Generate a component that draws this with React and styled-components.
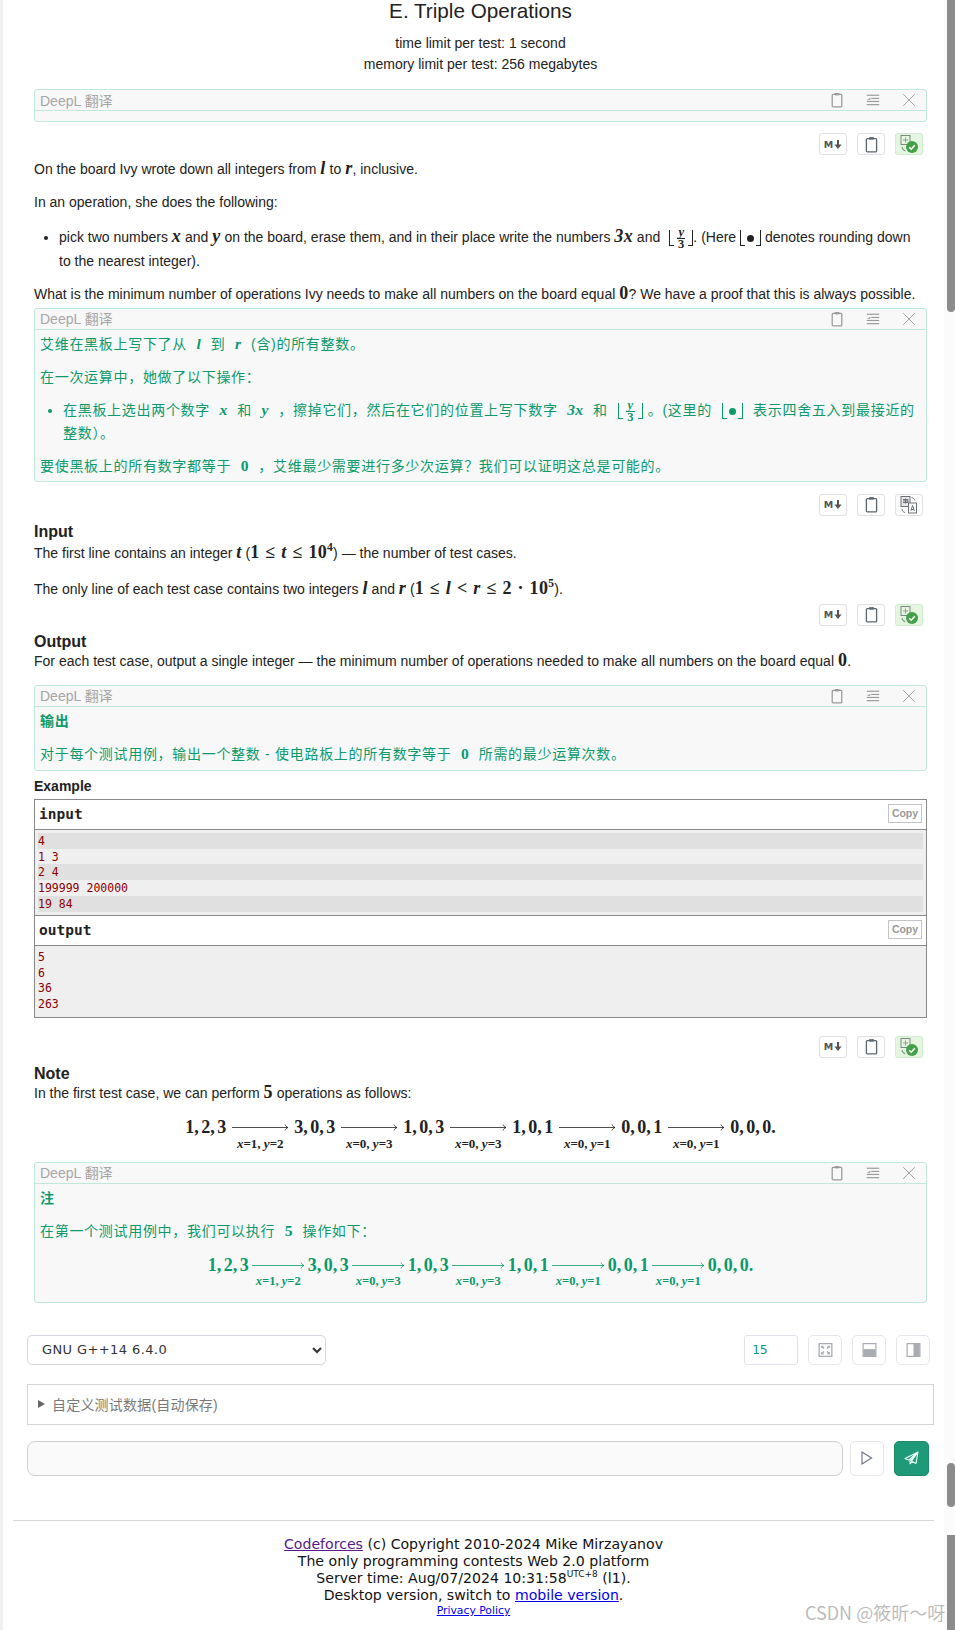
import React from "react";
import styled, { createGlobalStyle } from "styled-components";

const GlobalStyle = createGlobalStyle`
  html, body {
    margin: 0;
    padding: 0;
    background: #fff;
  }
  body {
    font-family: "Liberation Sans", Arial, sans-serif;
    color: #222;
  }
`;

const SANS = `"Liberation Sans", Arial, sans-serif`;
const CJK = `"Liberation Sans", "Noto Sans CJK SC", sans-serif`;
const MONO = `"DejaVu Sans Mono", "Liberation Mono", monospace`;

function ClipboardIcon({ size = 16, color = "#999" }) {
  return (
    <svg width={size} height={size} viewBox="0 0 18 18" fill="none" stroke={color} strokeWidth="1.4">
      <rect x="3.6" y="2.8" width="10.8" height="14" rx="1" />
      <rect x="6.5" y="1.2" width="5" height="2.6" fill={color} stroke="none" />
    </svg>
  );
}

function OutdentIcon() {
  return (
    <svg width="16" height="16" viewBox="0 0 18 18" fill="#999">
      <rect x="2" y="3" width="14" height="1.3" />
      <rect x="7" y="6.6" width="9" height="1.3" />
      <rect x="2" y="10" width="14" height="1.3" />
      <rect x="2" y="13.6" width="14" height="1.3" />
      <path d="M2 8.8l4-2.4v2.4z" />
    </svg>
  );
}

function CloseIcon() {
  return (
    <svg width="16" height="16" viewBox="0 0 18 18" stroke="#999" strokeWidth="1">
      <path d="M2.5 2.5l13 13M15.5 2.5l-13 13" />
    </svg>
  );
}

function DownArrowIcon() {
  return (
    <svg width="8" height="9" viewBox="0 0 8 9" fill="#555">
      <path d="M3 0h2v4.5h2.6L4 9 .4 4.5H3z" />
    </svg>
  );
}

function TranslateDoneIcon() {
  return (
    <svg width="20" height="20" viewBox="0 0 20 20" fill="none">
      <rect x="2" y="1.5" width="9" height="9" stroke="#7a8a7a" strokeWidth="1" />
      <path d="M4 6h5M6.5 3.5v5" stroke="#88a888" strokeWidth="1" />
      <path d="M3 13c.3 2 1.5 3.4 3.4 4" stroke="#7a9a7a" strokeWidth="1.1" />
      <circle cx="13" cy="13" r="6" fill="#43a047" />
      <path d="M10.2 13.2l2 2 3.6-4" stroke="#fff" strokeWidth="1.5" />
    </svg>
  );
}

function TranslateIcon() {
  return (
    <svg width="20" height="20" viewBox="0 0 20 20" fill="none" stroke="#6b7078" strokeWidth="1">
      <rect x="2" y="1.5" width="9" height="10" fill="#e8e8ea" />
      <path d="M4 6h5M6.5 3.5v5M4 4.5h5v3H4" />
      <rect x="9.5" y="8" width="8" height="10" fill="#fff" />
      <path d="M11.8 16l1.8-5.5 1.8 5.5M12.5 14.5h2.2" />
      <path d="M3 14c.2 1.8 1.2 3 3 3.6M12.5 2.5c1.8.3 3 1.4 3.4 3" />
    </svg>
  );
}

function FullscreenIcon() {
  return (
    <svg width="15" height="14" viewBox="0 0 16 16" fill="#a9adb3">
      <path d="M0 0h16v16H0zM1.5 1.5v13h13v-13z" fillRule="evenodd" />
      <path d="M3 3h3.4L5.3 4.1l1.6 1.6-1.2 1.2-1.6-1.6L3 6.4zM13 3v3.4l-1.1-1.1-1.6 1.6-1.2-1.2 1.6-1.6L9.6 3zM3 13V9.6l1.1 1.1 1.6-1.6 1.2 1.2-1.6 1.6L6.4 13zM13 13H9.6l1.1-1.1-1.6-1.6 1.2-1.2 1.6 1.6L13 9.6z" />
    </svg>
  );
}

function SplitBottomIcon() {
  return (
    <svg width="15" height="14" viewBox="0 0 16 16">
      <rect x=".7" y=".7" width="14.6" height="14.6" fill="#fff" stroke="#a9adb3" strokeWidth="1.4" />
      <rect x="1" y="7" width="14" height="8" fill="#a9adb3" />
    </svg>
  );
}

function SplitRightIcon() {
  return (
    <svg width="15" height="14" viewBox="0 0 16 16">
      <rect x=".7" y=".7" width="14.6" height="14.6" fill="#fff" stroke="#a9adb3" strokeWidth="1.4" />
      <rect x="8" y="1" width="7" height="14" fill="#a9adb3" />
    </svg>
  );
}

function PlayIcon() {
  return (
    <svg width="12" height="14" viewBox="0 0 12 14" fill="none" stroke="#6a6f85" strokeWidth="1.1">
      <path d="M1 1l9.6 6L1 13z" />
    </svg>
  );
}

function SendIcon() {
  return (
    <svg width="15" height="14" viewBox="0 0 15 14" fill="none" stroke="#e8fff6" strokeWidth="1.1" strokeLinejoin="round">
      <path d="M14 1L1 7.5l3.6 1.6zM14 1l-2 11.5-4.6-2.4zM14 1L6 9.6v3.2l2-2.4" />
    </svg>
  );
}

function ArrowLine({ width }) {
  return (
    <svg width={width} height="9" viewBox={`0 0 ${width} 9`} fill="none" stroke="currentColor" strokeWidth="0.8">
      <path d={`M0 4.5H${width - 1}M${width - 4} 1.5c.5 1.4 1.6 2.4 3 3c-1.4.6-2.5 1.6-3 3`} />
    </svg>
  );
}

const Page = styled.div`
  box-sizing: border-box;
  width: 955px;
  height: 1630px;
  overflow: hidden;
  position: relative;
  border-left: 3px solid #f0f0f0;
`;

const Statement = styled.div`
  margin: 0 28px 0 31px;
  font-size: 14px;
  line-height: 21px;
`;

const Title = styled.div`
  text-align: center;
  font-size: 20.7px;
  line-height: 22px;
  color: #222;
  margin-bottom: 11px;
`;

const Limit = styled.div`
  text-align: center;
  font-size: 14px;
  line-height: 21px;
`;

const Deepl = styled.div`
  box-sizing: border-box;
  margin-top: ${(p) => p.$top || 0}px;
  border: 1px solid #c0e9dc;
  border-radius: 3px;
  background: #f8f8f8;
  color: #0a9a6c;
  font-family: ${CJK};
  font-size: 14px;
  height: ${(p) => p.$height}px;
`;

const DeeplHead = styled.div`
  box-sizing: border-box;
  height: 21px;
  display: flex;
  align-items: center;
  border-bottom: 1px solid #c0e9dc;
  padding: 0 0 0 5px;
  color: #a6a6a6;
  font-size: 14px;
`;

const DeeplLabel = styled.span`
  padding-top: 2px;
`;

const DeeplTools = styled.div`
  margin-left: auto;
  display: flex;
  gap: 20px;
  padding-right: 9px;
`;

const DeeplBody = styled.div`
  padding: 4px 5px 0;
  line-height: 21px;
`;

const ZhPara = styled.p`
  margin: 0 0 12px;
  letter-spacing: 0.7px;
`;

const ZhList = styled.ul`
  margin: 0 0 12px;
  padding: 0 0 0 23px;
  letter-spacing: 0.7px;
`;

const ToolRow = styled.div`
  display: flex;
  justify-content: flex-end;
  gap: 10px;
  padding-right: 4px;
  margin-top: ${(p) => p.$top || 0}px;
`;

const ToolButton = styled.div`
  box-sizing: border-box;
  width: 28px;
  height: 22px;
  display: flex;
  align-items: center;
  justify-content: center;
  gap: 1px;
  border: 1px solid ${(p) => (p.$done ? "#cfeccd" : "#e0e0e4")};
  border-radius: 3px;
  background: ${(p) => (p.$done ? "#e4f6e2" : "#fff")};
  font-family: "DejaVu Sans", sans-serif;
  font-size: 9.5px;
  font-weight: bold;
  color: #555;
`;

const Para = styled.p`
  margin: ${(p) => p.$top || 0}px 0 0;
`;

const List = styled.ul`
  margin: ${(p) => p.$top || 0}px 0 0;
  padding: 0 8px 0 25px;
  line-height: 23px;
`;

const SectionTitle = styled.div`
  font-size: ${(p) => p.$size || 16}px;
  font-weight: bold;
  line-height: 19px;
  color: #222;
  margin-top: ${(p) => p.$top || 0}px;
`;

const M = styled.span`
  font-family: "Liberation Serif", serif;
  font-weight: bold;
  font-style: ${(p) => (p.$up ? "normal" : "italic")};
  font-size: ${(p) => (p.$gap ? 15.5 : 18)}px;
  line-height: 1;
  white-space: nowrap;
  letter-spacing: 0.3px;
  word-spacing: 1px;
  margin: ${(p) => (p.$gap ? "0 5px" : "0")};
  sup {
    font-size: 11.5px;
    line-height: 0;
    font-style: normal;
  }
`;

const Floor = styled.span`
  white-space: nowrap;
  margin: 0 ${(p) => p.$right || 0}px 0 ${(p) => p.$left || 0}px;
`;

const Frac = styled.span`
  display: inline-flex;
  flex-direction: column;
  align-items: center;
  vertical-align: middle;
  font-family: "Liberation Serif", serif;
  font-weight: bold;
  font-size: 12.5px;
  line-height: 11px;
  margin: 0 3px;
  i, b {
    padding: 0 1px;
  }
  b {
    border-top: 1px solid currentColor;
  }
`;

const Bracket = styled.span`
  display: inline-block;
  box-sizing: border-box;
  width: 5px;
  height: 16px;
  vertical-align: middle;
  border-bottom: 1px solid currentColor;
  border-${(p) => (p.$right ? "right" : "left")}: 1px solid currentColor;
`;

const Dot = styled.span`
  display: inline-block;
  width: 7px;
  height: 7px;
  margin: 0 2px;
  border-radius: 50%;
  vertical-align: middle;
  background: currentColor;
`;

const Samples = styled.div`
  margin-top: 3px;
  border: 1px solid #888;
  font-family: ${MONO};
`;

const SampleHead = styled.div`
  box-sizing: border-box;
  height: ${(p) => p.$h}px;
  display: flex;
  align-items: center;
  justify-content: space-between;
  padding: 0 4px;
  border-bottom: 1px solid #888;
  font-size: 14.5px;
  font-weight: bold;
  color: #222;
`;

const CopyButton = styled.div`
  box-sizing: border-box;
  width: 34px;
  height: 19px;
  border: 1px solid #c4c4c4;
  display: flex;
  align-items: center;
  justify-content: center;
  margin-top: -2px;
  font-family: ${SANS};
  font-size: 10.5px;
  font-weight: bold;
  color: #999;
`;

const SampleBody = styled.div`
  background: #efefef;
  padding: 3px 3px ${(p) => (p.$last ? 5 : 3)}px;
  font-size: 11.5px;
  line-height: 16px;
  color: #8b0000;
  border-bottom: ${(p) => (p.$last ? "none" : "1px solid #888")};
`;

const SampleRow = styled.div`
  height: 15.8px;
  background: ${(p) => (p.$odd ? "#e0e0e0" : "transparent")};
  white-space: pre;
`;

const Equation = styled.div`
  display: flex;
  justify-content: center;
  align-items: flex-start;
  gap: ${(p) => (p.$small ? 3 : 5.5)}px;
  margin-top: ${(p) => p.$top || 0}px;
  height: ${(p) => p.$h}px;
  font-family: "Liberation Serif", serif;
  font-weight: bold;
  font-size: 18px;
  word-spacing: -2px;
  line-height: 22px;
  white-space: nowrap;
`;

const Transition = styled.div`
  display: flex;
  flex-direction: column;
  align-items: center;
  width: ${(p) => (p.$small ? 53 : 57)}px;
  padding-top: 7px;
  font-size: ${(p) => (p.$small ? 12.5 : 13)}px;
  word-spacing: 0;
  line-height: 12px;
  svg {
    display: block;
    margin-bottom: ${(p) => (p.$small ? 5 : 6)}px;
  }
`;

const Toolbar = styled.div`
  display: flex;
  align-items: center;
  margin: 32px 25px 0 24px;
  height: 30px;
`;

const LangSelect = styled.select`
  box-sizing: border-box;
  width: 299px;
  height: 30px;
  border: 1px solid #d5d8e0;
  border-radius: 5px;
  background: #fff;
  padding: 0 10px;
  font-family: "DejaVu Sans", sans-serif;
  font-size: 13px;
  letter-spacing: 0.4px;
  color: #333;
`;

const FontInput = styled.div`
  box-sizing: border-box;
  margin-left: auto;
  width: 54px;
  height: 30px;
  border: 1px solid #e0e2ea;
  border-radius: 3px;
  display: flex;
  align-items: center;
  padding-left: 7px;
  font-family: ${MONO};
  font-size: 13px;
  color: #0a9a8c;
`;

const SquareButton = styled.div`
  box-sizing: border-box;
  width: ${(p) => p.$w || 34}px;
  height: ${(p) => p.$h || 30}px;
  margin-left: ${(p) => p.$ml || 10}px;
  border: 1px solid ${(p) => (p.$primary ? "#1c8a68" : "#e4e6ec")};
  border-radius: 5px;
  background: ${(p) => (p.$primary ? "#1f9a78" : "#fff")};
  display: flex;
  align-items: center;
  justify-content: center;
  flex: none;
`;

const Details = styled.div`
  box-sizing: border-box;
  margin: 19px 21px 0 24px;
  height: 41px;
  border: 1px solid #d4d4d4;
  display: flex;
  align-items: center;
  padding-left: 10px;
  gap: 7px;
  font-family: ${CJK};
  font-size: 14px;
  letter-spacing: 0.2px;
  color: #7a7a7a;
`;

const Caret = styled.span`
  width: 0;
  height: 0;
  border-left: 7px solid #666;
  border-top: 4.5px solid transparent;
  border-bottom: 4.5px solid transparent;
`;

const SubmitRow = styled.div`
  display: flex;
  margin: 16px 23px 0 24px;
  height: 35px;
`;

const CodeBox = styled.div`
  box-sizing: border-box;
  width: 816px;
  height: 35px;
  border: 1px solid #d0d0d0;
  border-radius: 8px;
  background: #fafafa;
`;

const Footer = styled.div`
  margin: 44px 21px 0 10px;
  padding-top: 15px;
  border-top: 1px solid #d8d8d8;
  text-align: center;
  font-family: "DejaVu Sans", sans-serif;
  font-size: 14.1px;
  line-height: 17px;
  color: #111;
  a {
    color: #0000ee;
  }
  a.visited {
    color: #551a8b;
  }
  sup {
    font-size: 9px;
    line-height: 0;
  }
`;

const Privacy = styled.a`
  display: block;
  font-size: 10.8px;
  line-height: 14px;
`;

const ScrollTrack = styled.div`
  position: absolute;
  top: 0;
  right: 0;
  width: 11px;
  height: 100%;
  background: #fbfbfb;
`;

const ScrollThumb = styled.div`
  position: absolute;
  right: 0;
  width: 8px;
  top: ${(p) => p.$top}px;
  height: ${(p) => p.$h}px;
  background: #8c8c8c;
  border-radius: ${(p) => p.$r || 0};
`;

const Watermark = styled.div`
  position: absolute;
  right: 0;
  bottom: 5px;
  width: 150px;
  overflow: hidden;
  white-space: nowrap;
  font-family: "Noto Sans CJK SC", sans-serif;
  font-size: 18px;
  color: rgba(130, 130, 130, 0.55);
`;

function DeeplBox({ children, top, height }) {
  return (
    <Deepl $top={top} $height={height}>
      <DeeplHead>
        <DeeplLabel>DeepL 翻译</DeeplLabel>
        <DeeplTools>
          <ClipboardIcon />
          <OutdentIcon />
          <CloseIcon />
        </DeeplTools>
      </DeeplHead>
      {children}
    </Deepl>
  );
}

function Tools({ top, done = true }) {
  return (
    <ToolRow $top={top}>
      <ToolButton>
        M<DownArrowIcon />
      </ToolButton>
      <ToolButton>
        <ClipboardIcon size={17} color="#5c6670" />
      </ToolButton>
      <ToolButton $done={done}>{done ? <TranslateDoneIcon /> : <TranslateIcon />}</ToolButton>
    </ToolRow>
  );
}

function FloorFrac({ left, right }) {
  return (
    <Floor $left={left} $right={right}>
      <Bracket />
      <Frac>
        <i>y</i>
        <b>3</b>
      </Frac>
      <Bracket $right />
    </Floor>
  );
}

function FloorDot({ left, right }) {
  return (
    <Floor $left={left} $right={right}>
      <Bracket />
      <Dot />
      <Bracket $right />
    </Floor>
  );
}

const steps = [
  ["1, 2, 3", "x", "=1, ", "y", "=2"],
  ["3, 0, 3", "x", "=0, ", "y", "=3"],
  ["1, 0, 3", "x", "=0, ", "y", "=3"],
  ["1, 0, 1", "x", "=0, ", "y", "=1"],
  ["0, 0, 1", "x", "=0, ", "y", "=1"],
];

function Chain({ small, top, h }) {
  return (
    <Equation $small={small} $top={top} $h={h}>
      {steps.map(([value, a, b, c, d]) => (
        <React.Fragment key={value}>
          <span>{value}</span>
          <Transition $small={small}>
            <ArrowLine width={small ? 53 : 57} />
            <span>
              <i>{a}</i>
              {b}
              <i>{c}</i>
              {d}
            </span>
          </Transition>
        </React.Fragment>
      ))}
      <span>0, 0, 0.</span>
    </Equation>
  );
}

export default function App() {
  return (
    <>
      <GlobalStyle />
      <Page>
        <Statement>
          <Title>E. Triple Operations</Title>
          <Limit>time limit per test: 1 second</Limit>
          <Limit>memory limit per test: 256 megabytes</Limit>

          <DeeplBox top={14} height={33} />
          <Tools top={11} />
          <Para $top={4}>
            On the board Ivy wrote down all integers from <M>l</M> to <M>r</M>, inclusive.
          </Para>
          <Para $top={12}>In an operation, she does the following:</Para>
          <List $top={13}>
            <li>
              pick two numbers <M>x</M> and <M>y</M> on the board, erase them, and in their place write the numbers{" "}
              <M>3x</M> and <FloorFrac left={5} />. (Here <FloorDot /> denotes rounding down to the nearest integer).
            </li>
          </List>
          <Para $top={11}>
            What is the minimum number of operations Ivy needs to make all numbers on the board equal <M $up>0</M>? We
            have a proof that this is always possible.
          </Para>

          <DeeplBox top={3} height={174}>
            <DeeplBody>
              <ZhPara>
                艾维在黑板上写下了从 <M $gap>l</M> 到 <M $gap>r</M> (含)的所有整数。
              </ZhPara>
              <ZhPara>在一次运算中，她做了以下操作：</ZhPara>
              <ZhList>
                <li>
                  在黑板上选出两个数字 <M $gap>x</M> 和 <M $gap>y</M> ，擦掉它们，然后在它们的位置上写下数字 <M $gap>3x</M> 和{" "}
                  <FloorFrac left={6} /> 。(这里的 <FloorDot left={5} right={6} /> 表示四舍五入到最接近的整数）。
                </li>
              </ZhList>
              <ZhPara>
                要使黑板上的所有数字都等于 <M $gap $up>0</M> ，艾维最少需要进行多少次运算？我们可以证明这总是可能的。
              </ZhPara>
            </DeeplBody>
          </DeeplBox>
          <Tools top={12} done={false} />

          <SectionTitle $top={6}>Input</SectionTitle>
          <Para $top={2}>
            The first line contains an integer <M>t</M> (<M $up>1 ≤ </M>
            <M>t</M>
            <M $up> ≤ 10</M>
            <M $up><sup>4</sup></M>) — the number of test cases.
          </Para>
          <Para $top={15}>
            The only line of each test case contains two integers <M>l</M> and <M>r</M> (<M $up>1 ≤ </M>
            <M>l</M>
            <M $up> &lt; </M>
            <M>r</M>
            <M $up> ≤ 2 · 10</M>
            <M $up><sup>5</sup></M>).
          </Para>
          <Tools top={4} />

          <SectionTitle $top={6}>Output</SectionTitle>
          <Para>
            For each test case, output a single integer — the minimum number of operations needed to make all numbers
            on the board equal <M $up>0</M>.
          </Para>

          <DeeplBox top={13} height={86}>
            <DeeplBody>
              <ZhPara><b>输出</b></ZhPara>
              <ZhPara>
                对于每个测试用例，输出一个整数 - 使电路板上的所有数字等于 <M $gap $up>0</M> 所需的最少运算次数。
              </ZhPara>
            </DeeplBody>
          </DeeplBox>

          <SectionTitle $size={14} $top={6}>Example</SectionTitle>
          <Samples>
            <SampleHead $h={30}>
              input
              <CopyButton>Copy</CopyButton>
            </SampleHead>
            <SampleBody>
              <SampleRow $odd>4</SampleRow>
              <SampleRow>1 3</SampleRow>
              <SampleRow $odd>2 4</SampleRow>
              <SampleRow>199999 200000</SampleRow>
              <SampleRow $odd>19 84</SampleRow>
            </SampleBody>
            <SampleHead $h={30}>
              output
              <CopyButton>Copy</CopyButton>
            </SampleHead>
            <SampleBody $last>
              <SampleRow>5</SampleRow>
              <SampleRow>6</SampleRow>
              <SampleRow>36</SampleRow>
              <SampleRow>263</SampleRow>
            </SampleBody>
          </Samples>
          <Tools top={18} />

          <SectionTitle $top={6}>Note</SectionTitle>
          <Para>
            In the first test case, we can perform <M $up>5</M> operations as follows:
          </Para>
          <Chain top={12} h={46} />

          <DeeplBox top={0} height={141}>
            <DeeplBody>
              <ZhPara><b>注</b></ZhPara>
              <ZhPara>
                在第一个测试用例中，我们可以执行 <M $gap $up>5</M> 操作如下：
              </ZhPara>
              <Chain small h={40} />
            </DeeplBody>
          </DeeplBox>
        </Statement>

        <Toolbar>
          <LangSelect defaultValue="g14">
            <option value="g14">GNU G++14 6.4.0</option>
          </LangSelect>
          <FontInput>15</FontInput>
          <SquareButton><FullscreenIcon /></SquareButton>
          <SquareButton><SplitBottomIcon /></SquareButton>
          <SquareButton><SplitRightIcon /></SquareButton>
        </Toolbar>

        <Details>
          <Caret />
          自定义测试数据(自动保存)
        </Details>

        <SubmitRow>
          <CodeBox />
          <SquareButton $h={35} $ml={7}><PlayIcon /></SquareButton>
          <SquareButton $h={35} $ml={10} $w={35} $primary><SendIcon /></SquareButton>
        </SubmitRow>

        <Footer>
          <a className="visited" href="#cf">Codeforces</a> (c) Copyright 2010-2024 Mike Mirzayanov
          <br />
          The only programming contests Web 2.0 platform
          <br />
          Server time: Aug/07/2024 10:31:58<sup>UTC+8</sup> (l1).
          <br />
          Desktop version, switch to <a href="#mobile">mobile version</a>.
          <Privacy href="#privacy">Privacy Policy</Privacy>
        </Footer>

        <ScrollTrack />
        <ScrollThumb $top={0} $h={312} $r="0 0 4px 4px" />
        <ScrollThumb $top={1463} $h={44} $r="4px" />
        <ScrollThumb $top={1535} $h={95} />
        <Watermark>CSDN @筱昕～呀</Watermark>
      </Page>
    </>
  );
}
